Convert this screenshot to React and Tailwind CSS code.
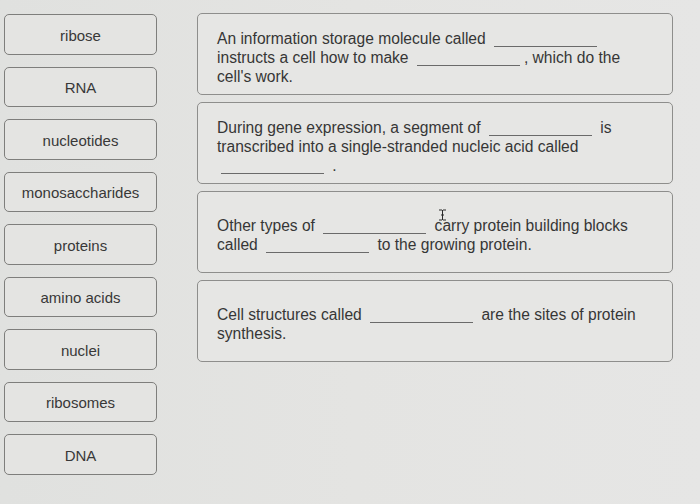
import React from 'react';

const words = ['ribose', 'RNA', 'nucleotides', 'monosaccharides', 'proteins', 'amino acids', 'nuclei', 'ribosomes', 'DNA'];

const Blank = () => (
  <span className="inline-block w-[103px] mx-[4px] border-b border-[#6a6a6a] align-[-3px]" />
);

const Question = ({ children, cursor }) => (
  <div className="relative h-[82px] flex items-center pt-[6px] px-[19px] border border-[#8e8e8c] rounded-[5px] bg-[#e6e6e4]">
    <p className="w-[436px] text-[15.6px] leading-[19px] text-[#363636]">{children}</p>
    {cursor && (
      <svg className="absolute left-[240px] top-[17px]" width="9" height="12" viewBox="0 0 9 12">
        {/* text cursor over the card */}
        <path d="M1 1h3M5 1h3M4.5 1v10M1 11h3M5 11h3M3 6h3" stroke="#2a2a2a" strokeWidth="1" fill="none" />
      </svg>
    )}
  </div>
);

export default function App() {
  return (
    <div
      className="w-[700px] h-[504px] overflow-hidden bg-gradient-to-r from-[#e0e1df] via-[#e4e4e2] to-[#e6e6e5] flex pt-[13px] pl-[4px]"
      style={{ fontFamily: '"Liberation Sans", Arial, sans-serif' }}
    >
      {/* Word bank */}
      <div className="w-[153px] flex flex-col gap-[12px] pt-[1px]">
        {words.map((w) => (
          <div
            key={w}
            className="h-[40.5px] flex items-center justify-center pt-[3px] border border-[#7e7e7c] rounded-[5px] bg-[#e4e4e2] text-[15px] text-[#383838]"
          >
            {w}
          </div>
        ))}
      </div>

      {/* Sentences */}
      <div className="ml-[40px] w-[476px] flex flex-col gap-[7px]">
        <Question>
          An information storage molecule called <Blank /> instructs a cell how to make <Blank />, which do the cell's work.
        </Question>
        <Question>
          During gene expression, a segment of <Blank /> is transcribed into a single-stranded nucleic acid called <Blank /> .
        </Question>
        <Question cursor>
          Other types of <Blank /> carry protein building blocks called <Blank /> to the growing protein.
        </Question>
        <Question>
          Cell structures called <Blank /> are the sites of protein synthesis.
        </Question>
      </div>
    </div>
  );
}
